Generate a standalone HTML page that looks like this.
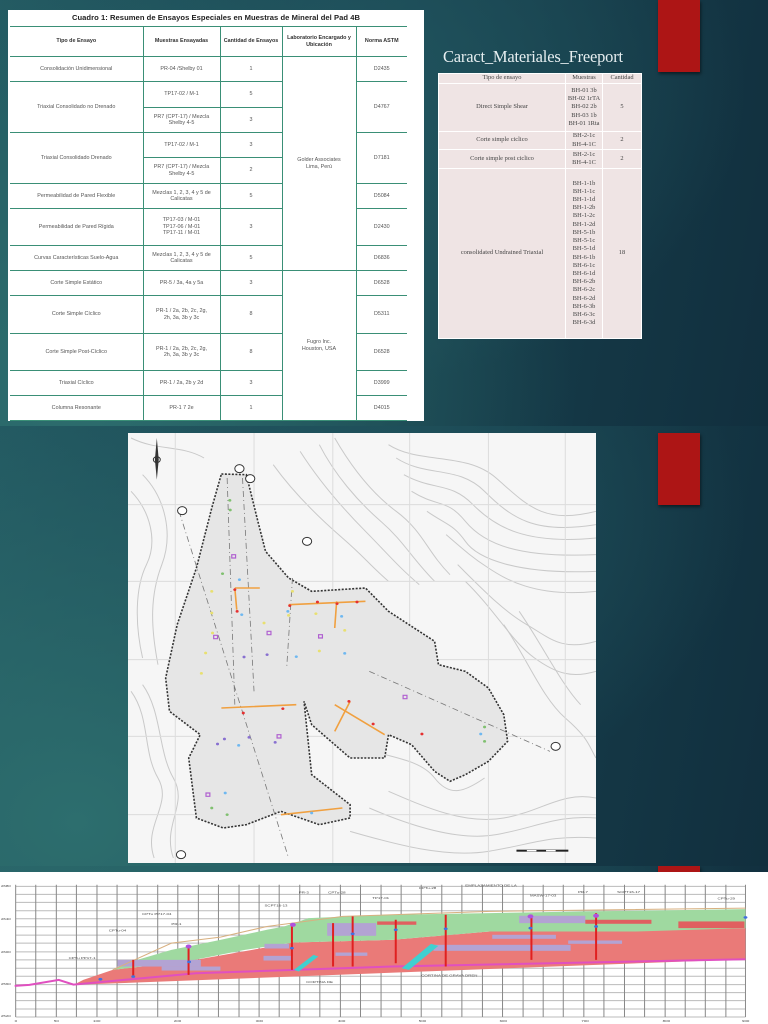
<!DOCTYPE html>
<html><head><meta charset="utf-8"><style>
*{margin:0;padding:0;box-sizing:border-box}
body{width:768px;height:1024px;overflow:hidden;position:relative;font-family:"Liberation Sans",sans-serif;background:#163c4a}
.slide{position:absolute;left:0;width:768px;overflow:hidden}
.bg{background:radial-gradient(ellipse 500px 420px at 10% 90%,#2d6e6e 0%,rgba(40,100,105,0) 100%),radial-gradient(ellipse 400px 300px at 45% 20%,#21555f 0%,rgba(33,85,95,0) 100%),linear-gradient(100deg,#235a62 0%,#173f4c 55%,#112f3e 100%)}
.red{position:absolute;left:658px;width:42px;height:72px;background:#ad1515;box-shadow:1px 2px 3px rgba(0,0,0,.5)}
#t1box{position:absolute;left:8px;top:10px;width:416px;height:411px;background:#fff}
#t1title{position:absolute;left:0;top:3px;width:416px;text-align:center;font-weight:bold;font-size:7.6px;color:#222;letter-spacing:.05px}
table.t1{position:absolute;left:2px;top:16px;border-collapse:collapse;font-size:5.4px;color:#555;table-layout:fixed}
table.t1 td{border:1.3px solid #3a8f76;text-align:center;vertical-align:middle;line-height:6.4px;padding:0 2px}
table.t1 tr:first-child td{font-weight:bold;color:#333}
table.t1 td:first-child{border-left:none}
table.t1 td:last-child{border-right:none}
#t2title{position:absolute;left:443px;top:47px;font-family:"Liberation Serif",serif;font-size:16.5px;color:#e6eef0;letter-spacing:-.2px}
table.t2{position:absolute;left:438px;top:73px;border-collapse:collapse;font-family:"Liberation Serif",serif;font-size:6.4px;color:#444;background:#efe4e4;table-layout:fixed}
table.t2 td{border:1.2px solid #fff;text-align:center;vertical-align:middle;line-height:8.2px}
</style></head><body>

<!-- slide 1 -->
<div class="slide bg" style="top:0;height:426px">
  <div class="red" style="top:0;height:72px"></div>
  <div id="t1box">
    <div id="t1title">Cuadro 1: Resumen de Ensayos Especiales en Muestras de Mineral del Pad 4B</div>
    <table class="t1">
      <colgroup><col style="width:133px"><col style="width:77px"><col style="width:62px"><col style="width:74px"><col style="width:51px"></colgroup>
      <tr style="height:30px"><td>Tipo de Ensayo</td><td>Muestras Ensayadas</td><td>Cantidad de Ensayos</td><td>Laboratorio Encargado y Ubicación</td><td>Norma ASTM</td></tr>
      <tr style="height:25px"><td>Consolidación Unidimensional</td><td>PR-04 /Shelby 01</td><td>1</td><td rowspan="8">Golder Associates<br>Lima, Perú</td><td>D2435</td></tr>
      <tr style="height:26px"><td rowspan="2">Triaxial Consolidado no Drenado</td><td>TP17-02 / M-1</td><td>5</td><td rowspan="2">D4767</td></tr>
      <tr style="height:25px"><td>PR7 (CPT-17) / Mezcla Shelby 4-5</td><td>3</td></tr>
      <tr style="height:25px"><td rowspan="2">Triaxial Consolidado Drenado</td><td>TP17-02 / M-1</td><td>3</td><td rowspan="2">D7181</td></tr>
      <tr style="height:26px"><td>PR7 (CPT-17) / Mezcla Shelby 4-5</td><td>2</td></tr>
      <tr style="height:25px"><td>Permeabilidad de Pared Flexible</td><td>Mezclas 1, 2, 3, 4 y 5 de Calicatas</td><td>5</td><td>D5084</td></tr>
      <tr style="height:37px"><td>Permeabilidad de Pared Rígida</td><td>TP17-03 / M-01<br>TP17-06 / M-01<br>TP17-11 / M-01</td><td>3</td><td>D2430</td></tr>
      <tr style="height:25px"><td>Curvas Características Suelo-Agua</td><td>Mezclas 1, 2, 3, 4 y 5 de Calicatas</td><td>5</td><td>D6836</td></tr>
      <tr style="height:25px"><td>Corte Simple Estático</td><td>PR-5 / 3a, 4a y 5a</td><td>3</td><td rowspan="5">Fugro Inc.<br>Houston, USA</td><td>D6528</td></tr>
      <tr style="height:38px"><td>Corte Simple Cíclico</td><td>PR-1 / 2a, 2b, 2c, 2g,<br>2h, 3a, 3b y 3c</td><td>8</td><td>D5311</td></tr>
      <tr style="height:37px"><td>Corte Simple Post-Cíclico</td><td>PR-1 / 2a, 2b, 2c, 2g,<br>2h, 3a, 3b y 3c</td><td>8</td><td>D6528</td></tr>
      <tr style="height:25px"><td>Triaxial Cíclico</td><td>PR-1 / 2a, 2b y 2d</td><td>3</td><td>D3999</td></tr>
      <tr style="height:25px"><td>Columna Resonante</td><td>PR-1 7 2e</td><td>1</td><td>D4015</td></tr>
    </table>
  </div>
  <div id="t2title">Caract_Materiales_Freeport</div>
  <table class="t2">
    <colgroup><col style="width:127px"><col style="width:37px"><col style="width:39px"></colgroup>
    <tr style="height:10px"><td>Tipo de ensayo</td><td>Muestras</td><td>Cantidad</td></tr>
    <tr style="height:48px"><td>Direct Simple Shear</td><td>BH-01 3b<br>BH-02 1rTA<br>BH-02 2b<br>BH-03 1b<br>BH-01 1Rta</td><td>5</td></tr>
    <tr style="height:18px"><td>Corte simple ciclico</td><td>BH-2-1c<br>BH-4-1C</td><td>2</td></tr>
    <tr style="height:19px"><td>Corte simple post ciclico</td><td>BH-2-1c<br>BH-4-1C</td><td>2</td></tr>
    <tr style="height:170px"><td>consolidated Undrained Triaxial</td><td>BH-1-1b<br>BH-1-1c<br>BH-1-1d<br>BH-1-2b<br>BH-1-2c<br>BH-1-2d<br>BH-5-1b<br>BH-5-1c<br>BH-5-1d<br>BH-6-1b<br>BH-6-1c<br>BH-6-1d<br>BH-6-2b<br>BH-6-2c<br>BH-6-2d<br>BH-6-3b<br>BH-6-3c<br>BH-6-3d</td><td>18</td></tr>
  </table>
</div>

<!-- slide 2 -->
<div class="slide bg" style="top:426px;height:440px">
  <div class="red" style="top:7px"></div>
  <svg style="position:absolute;left:128px;top:7px" width="468" height="430" viewBox="22 25 1218 1290" preserveAspectRatio="none">
    <rect x="22" y="25" width="1218" height="1290" fill="#f6f6f6"/>
    <g fill="none" stroke="#c9c9c9" stroke-width="1">
      <path d="M700 60 C780 120 900 80 980 160 S1100 300 1240 260" vector-effect="non-scaling-stroke"/>
      <path d="M720 100 C800 160 880 120 950 200 S1080 330 1240 300" vector-effect="non-scaling-stroke"/>
      <path d="M740 150 C820 200 860 170 920 240 S1060 360 1240 340" vector-effect="non-scaling-stroke"/>
      <path d="M760 200 C830 250 850 220 900 290 S1040 400 1240 390" vector-effect="non-scaling-stroke"/>
      <path d="M800 260 C850 300 870 300 900 350 S1030 450 1240 440" vector-effect="non-scaling-stroke"/>
      <path d="M850 330 C900 380 920 400 960 430 S1080 520 1240 500" vector-effect="non-scaling-stroke"/>
      <path d="M880 420 C950 500 1000 560 1060 600 S1150 680 1240 650" vector-effect="non-scaling-stroke"/>
      <path d="M900 470 C980 560 1020 650 1080 700 S1180 760 1240 740" vector-effect="non-scaling-stroke"/>
      <path d="M560 40 C600 120 650 200 720 260 S800 380 860 450" vector-effect="non-scaling-stroke"/>
      <path d="M520 60 C560 150 620 230 680 290 S760 400 820 470" vector-effect="non-scaling-stroke"/>
      <path d="M470 80 C520 170 580 250 640 320 S720 420 780 480" vector-effect="non-scaling-stroke"/>
      <path d="M400 120 C450 200 520 280 580 340 S650 420 700 470" vector-effect="non-scaling-stroke"/>
      <path d="M30 200 C80 260 100 350 70 420 S40 600 60 700" vector-effect="non-scaling-stroke"/>
      <path d="M60 150 C120 220 140 330 110 420 S80 600 100 720" vector-effect="non-scaling-stroke"/>
      <path d="M30 800 C80 880 60 980 100 1060 S60 1200 90 1300" vector-effect="non-scaling-stroke"/>
      <path d="M60 780 C110 860 100 980 140 1060 S110 1200 140 1300" vector-effect="non-scaling-stroke"/>
      <path d="M700 1100 C800 1150 900 1200 1000 1180 S1150 1100 1240 1120" vector-effect="non-scaling-stroke"/>
      <path d="M650 1150 C750 1200 880 1250 980 1230 S1140 1170 1240 1180" vector-effect="non-scaling-stroke"/>
      <path d="M600 1220 C720 1260 850 1300 960 1280 S1120 1230 1240 1240" vector-effect="non-scaling-stroke"/>
      <path d="M1000 600 C1060 700 1100 820 1160 880 S1220 960 1240 1000" vector-effect="non-scaling-stroke"/>
      <path d="M1040 560 C1100 660 1150 780 1200 840" vector-effect="non-scaling-stroke"/>
      <path d="M30 40 C100 80 160 60 220 100" vector-effect="non-scaling-stroke"/>
      <path d="M600 960 C700 1000 780 1000 820 1060 S900 1100 950 1060" vector-effect="non-scaling-stroke"/>
    </g>
    <g stroke="#dcdcdc" stroke-width="1" fill="none">
      <path d="M145 25V1315M350 25V1315M555 25V1315M755 25V1315M960 25V1315M1160 25V1315M22 240H1240M22 470H1240M22 705H1240M22 935H1240M22 1170H1240" vector-effect="non-scaling-stroke"/>
    </g>
    <path d="M265 148L330 150L360 290L380 380L440 460L500 500L640 490L700 560L820 650L830 720L900 740L960 790L1000 870L1010 950L960 1010L900 1050L860 1070L820 1040L760 960L700 930L690 1000L600 1000L500 900L480 830L500 1050L600 1140L600 1180L520 1200L420 1160L330 1200L270 1210L200 1180L180 1000L210 930L130 860L120 760L150 600L200 430L240 250Z" fill="#e6e6e6" stroke="#333" stroke-width="1.6" stroke-dasharray="2 1.5" vector-effect="non-scaling-stroke"/>
    <g fill="none" stroke="#777" stroke-width=".8" stroke-dasharray="6 3 1 3">
      <path d="M155 260L440 1300M280 160L300 840M320 160L350 800M650 740L1120 980M450 460L435 730" vector-effect="non-scaling-stroke"/>
    </g>
    <g stroke="#f0a040" stroke-width="1.6" fill="none">
      <path d="M265 850L460 840M300 490L365 490M300 490L305 555M440 540L640 530M565 530L560 610M560 840L690 930M560 920L600 830M420 1170L580 1150" vector-effect="non-scaling-stroke"/>
    </g>
    <g fill="#e53030">
      <circle cx="300" cy="495" r="4"/><circle cx="443" cy="543" r="4"/><circle cx="515" cy="532" r="4"/><circle cx="566" cy="537" r="4"/><circle cx="618" cy="532" r="4"/><circle cx="322" cy="865" r="4"/><circle cx="425" cy="852" r="4"/><circle cx="597" cy="830" r="4"/><circle cx="660" cy="898" r="4"/><circle cx="787" cy="928" r="4"/><circle cx="306" cy="560" r="4"/>
    </g>
    <g fill="#e8e070">
      <circle cx="240" cy="500" r="4"/><circle cx="240" cy="565" r="4"/><circle cx="242" cy="625" r="4"/><circle cx="224" cy="685" r="4"/><circle cx="213" cy="746" r="4"/><circle cx="376" cy="595" r="4"/><circle cx="440" cy="572" r="4"/><circle cx="511" cy="567" r="4"/><circle cx="520" cy="679" r="4"/><circle cx="450" cy="500" r="4"/><circle cx="586" cy="617" r="4"/>
    </g>
    <g fill="#6fb8f0">
      <circle cx="312" cy="465" r="4"/><circle cx="318" cy="570" r="4"/><circle cx="438" cy="560" r="4"/><circle cx="578" cy="575" r="4"/><circle cx="460" cy="696" r="4"/><circle cx="586" cy="686" r="4"/><circle cx="310" cy="962" r="4"/><circle cx="275" cy="1105" r="4"/><circle cx="500" cy="1165" r="4"/><circle cx="940" cy="928" r="4"/>
    </g>
    <g fill="none" stroke="#b060d0" stroke-width="1.2">
      <rect x="292" y="390" width="10" height="10" vector-effect="non-scaling-stroke"/><rect x="384" y="620" width="10" height="10" vector-effect="non-scaling-stroke"/><rect x="518" y="630" width="10" height="10" vector-effect="non-scaling-stroke"/><rect x="245" y="632" width="10" height="10" vector-effect="non-scaling-stroke"/><rect x="738" y="812" width="10" height="10" vector-effect="non-scaling-stroke"/><rect x="410" y="930" width="10" height="10" vector-effect="non-scaling-stroke"/><rect x="225" y="1105" width="10" height="10" vector-effect="non-scaling-stroke"/>
    </g>
    <g fill="#80c070"><circle cx="287" cy="227" r="4"/><circle cx="288" cy="256" r="4"/><circle cx="268" cy="447" r="4"/><circle cx="950" cy="907" r="4"/><circle cx="950" cy="950" r="4"/><circle cx="240" cy="1150" r="4"/><circle cx="280" cy="1170" r="4"/></g>
    <g fill="#8870d0"><circle cx="273" cy="943" r="4"/><circle cx="255" cy="958" r="4"/><circle cx="337" cy="938" r="4"/><circle cx="405" cy="953" r="4"/><circle cx="384" cy="690" r="4"/><circle cx="324" cy="697" r="4"/></g>
    <path d="M97 40L92 105L97 165L102 105Z" fill="#333"/>
    <circle cx="97" cy="105" r="9" fill="none" stroke="#333" stroke-width="1" vector-effect="non-scaling-stroke"/>
    <g fill="#fff" stroke="#333" stroke-width="1"><circle cx="312" cy="132" r="12" vector-effect="non-scaling-stroke"/><circle cx="340" cy="162" r="12" vector-effect="non-scaling-stroke"/><circle cx="163" cy="258" r="12" vector-effect="non-scaling-stroke"/><circle cx="488" cy="350" r="12" vector-effect="non-scaling-stroke"/><circle cx="1135" cy="965" r="12" vector-effect="non-scaling-stroke"/><circle cx="160" cy="1290" r="12" vector-effect="non-scaling-stroke"/></g>
    <rect x="1033" y="1275" width="135" height="6" fill="#222"/>
    <rect x="1060" y="1276" width="25" height="4" fill="#fff"/><rect x="1110" y="1276" width="25" height="4" fill="#fff"/>
  </svg>
</div>

<!-- slide 3 -->
<div class="slide bg" style="top:866px;height:158px">
  <div class="red" style="top:0;height:10px"></div>
  <svg style="position:absolute;left:0;top:6px" width="768" height="152" viewBox="0 37 1568 455" preserveAspectRatio="none">
    <rect x="0" y="37" width="1568" height="455" fill="#fff"/>
    <g stroke="#bbb" stroke-width="1" fill="none">
      <path d="M32 80H1522M32 104H1522M32 128H1522M32 153H1522M32 177H1522M32 201H1522M32 226H1522M32 250H1522M32 276H1522M32 300H1522M32 325H1522M32 349H1522M32 374H1522M32 398H1522M32 422H1522M32 447H1522M32 471H1522" vector-effect="non-scaling-stroke"/>
    </g>
    <g stroke="#888" stroke-width="1" fill="none">
      <path d="M32 75V471M73 75V471M115 75V471M156 75V471M198 75V471M239 75V471M280 75V471M322 75V471M363 75V471M405 75V471M446 75V471M488 75V471M529 75V471M570 75V471M612 75V471M653 75V471M695 75V471M736 75V471M778 75V471M819 75V471M860 75V471M902 75V471M943 75V471M985 75V471M1026 75V471M1068 75V471M1109 75V471M1150 75V471M1192 75V471M1233 75V471M1275 75V471M1316 75V471M1358 75V471M1399 75V471M1440 75V471M1482 75V471M1522 75V471" vector-effect="non-scaling-stroke"/>
    </g>
    <path d="M150 375L1522 298L1522 205L1000 215L800 240L600 248L380 305L230 330L170 360Z" fill="#ea7a78"/>
    <path d="M230 330L280 300L350 270L450 240L545 210L580 200L630 175L800 165L1000 160L1200 155L1522 148L1522 205L1300 215L1000 215L880 230L800 240L600 248L500 270L380 305Z" fill="#9fd9a0"/>
    <g fill="#b3a3d3">
      <rect x="668" y="190" width="100" height="38"/><rect x="540" y="252" width="50" height="14"/><rect x="538" y="288" width="60" height="14"/><rect x="685" y="278" width="65" height="10"/><rect x="1060" y="168" width="135" height="22"/><rect x="1005" y="225" width="130" height="12"/><rect x="330" y="320" width="120" height="12"/><rect x="240" y="300" width="170" height="20"/><rect x="885" y="255" width="280" height="18"/><rect x="1160" y="242" width="110" height="10"/>
    </g>
    <g fill="#e06060"><rect x="1195" y="180" width="135" height="12"/><rect x="1385" y="185" width="135" height="20"/><rect x="770" y="185" width="80" height="10"/></g>
    <path d="M30 378L60 375L120 360L150 374L400 340L800 320L1522 298" fill="none" stroke="#e050c0" stroke-width="2" vector-effect="non-scaling-stroke"/>
    <path d="M230 330L350 250L450 232L545 200L700 170L1000 155L1522 145" fill="none" stroke="#d8b080" stroke-width="1" vector-effect="non-scaling-stroke"/>
    <path d="M600 330L640 285L650 290L610 335Z M820 325L880 252L895 258L835 330Z" fill="#40d0d0"/>
    <g stroke="#e02020" stroke-width="2"><path d="M272 300V352M385 265V345M596 195V330M680 190V320M720 170V320M808 180V310M910 165V320M1085 165V300M1217 160V300" vector-effect="non-scaling-stroke"/></g>
    <g fill="#4070e0"><circle cx="205" cy="358" r="4"/><circle cx="272" cy="350" r="4"/><circle cx="386" cy="306" r="4"/><circle cx="596" cy="265" r="4"/><circle cx="720" cy="222" r="4"/><circle cx="808" cy="210" r="4"/><circle cx="910" cy="207" r="4"/><circle cx="1083" cy="205" r="4"/><circle cx="1217" cy="200" r="4"/><circle cx="1522" cy="173" r="4"/></g>
    <g fill="#b050e0"><circle cx="385" cy="260" r="6"/><circle cx="598" cy="195" r="6"/><circle cx="1217" cy="168" r="6"/><circle cx="1083" cy="170" r="6"/></g>
    <g font-family="Liberation Sans,sans-serif" font-size="9" fill="#444">
      <text x="140" y="298">CPTu PP17-1</text><text x="222" y="215">CPTu-04</text><text x="290" y="165">CPTu PP17-04</text><text x="350" y="196">PR-1</text><text x="540" y="140">SCPT16-13</text><text x="610" y="102">PR-3</text><text x="670" y="102">CPTu-28</text><text x="760" y="118">TP17-01</text><text x="855" y="88">CPTu-28</text><text x="950" y="80">EMPLAZAMIENTO DE LA</text><text x="1082" y="110">MASW-17-03</text><text x="1180" y="100">PR-7</text><text x="1260" y="100">SCPT16-17</text><text x="1465" y="120">CPTu-29</text><text x="625" y="370">CORTINA DE</text><text x="860" y="350">CORTINA DE GRAVA DREN</text>
      <text x="2" y="82">2680</text><text x="2" y="180">2640</text><text x="2" y="280">2600</text><text x="2" y="375">2560</text><text x="2" y="471">2520</text>
      <text x="30" y="486">0</text><text x="110" y="486">50</text><text x="190" y="486">100</text><text x="355" y="486">200</text><text x="522" y="486">300</text><text x="690" y="486">400</text><text x="855" y="486">500</text><text x="1020" y="486">600</text><text x="1187" y="486">700</text><text x="1353" y="486">800</text><text x="1515" y="486">900</text>
    </g>
  </svg>
</div>
</body></html>
